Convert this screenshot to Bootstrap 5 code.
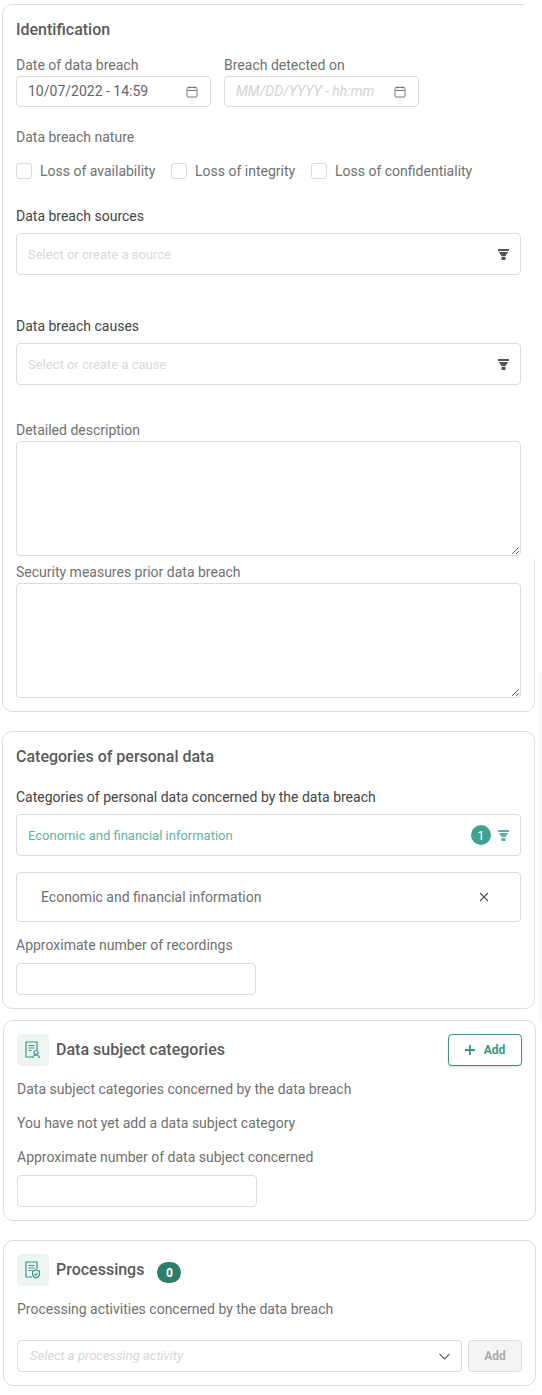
<!DOCTYPE html>
<html lang="en">
<head>
<meta charset="utf-8">
<title>Data breach</title>
<link href="https://cdn.jsdelivr.net/npm/bootstrap@5.3.0/dist/css/bootstrap.min.css" rel="stylesheet">
<style>
html,body{margin:0;background:#fff;}
body{font-family:Roboto,"Liberation Sans",sans-serif;font-size:14px;color:#707070;width:542px;height:1395px;overflow:hidden;position:relative;}
.pane{border:1px solid #dcdcdc;border-radius:10px;background:#fff;position:relative;}
.pane-a{margin:4px 7px 0 2px;height:708px;padding:13px 13px 0;}
.pane-b{margin:19px 7px 0 2px;height:278px;padding:13px 13px 0;}
.pane-c{margin:11px 6px 0 3px;height:201px;padding:13px 13px 0;}
.pane-d{margin:19px 6px 0 3px;height:146px;padding:13px 13px 0;}
.patch{position:absolute;background:#fff;}
.patch-top{left:521px;right:-8px;top:-2px;height:30px;}
.patch-right{right:-2px;width:4px;top:20px;height:534px;}
.track{position:absolute;left:538px;top:672px;width:4px;height:348px;background:#f8f9f9;}
.heading{font-size:16px;font-weight:500;color:#5a5a5a;line-height:24px;margin:0;}
.lbl{display:block;line-height:20px;margin:0;color:#707070;}
.lbl-dark{color:#444;}
.box{border:1px solid #dcdcdc;border-radius:4px;background:#fff;font-size:14px;box-shadow:none;padding:0;}
.date-box{width:195px;height:31px;padding:0 12px 0 11px;color:#666;}
.date-ph{color:#d2d2d2;font-style:italic;}
.drop-box{height:42px;padding:0 11px;font-size:13px;color:#d9d9d9;}
.drop-text{padding-top:2px;}
.drop-on{color:#62b3a4;}
.area{display:block;height:115px;width:505px;border-radius:4px;border-color:#dcdcdc;}
.num-box{width:240px;height:32px;display:block;border-color:#dcdcdc;border-radius:4px;}
.chk{width:16px;height:16px;margin:0 8px 0 0;border:1px solid #dadada;border-radius:3px;background:#fff;flex:none;}
.count{width:20px;height:20px;border-radius:50%;background:#3fa28e;color:#fff;font-size:13px;font-weight:400;padding:0;margin-right:7px;}
.item-box{height:50px;padding:0 31px 0 24px;color:#707070;margin-top:16px;}
.icon-tile{width:32px;height:32px;border-radius:4px;background:#edf5f3;flex:none;}
.add-on{width:74px;height:32px;border:1px solid #3a9485;border-radius:4px;color:#3a9485;font-size:12px;font-weight:700;padding:0;background:#fff;box-shadow:0 1px 2px rgba(0,0,0,.15);}
.add-off{width:54px;height:32px;border:1px solid #dedede;border-radius:4px;color:#aaa;font-size:12px;font-weight:700;padding:0;background:#f4f4f4;flex:none;}
.zero{width:24px;height:21px;border-radius:11px;background:#2f7d6b;color:#fff;font-size:12px;font-weight:700;padding:0;}
.sel-box{width:445px;height:32px;padding:0 11px 0 12px;color:#d6d6d6;font-style:italic;font-size:13px;}
</style>
</head>
<body>

<section class="pane pane-a">
  <span class="patch patch-top"></span><span class="patch patch-right"></span>
  <h2 class="heading">Identification</h2>
  <div class="d-flex" style="gap:13px;margin-top:2px">
    <div style="margin-top:14px">
      <label class="lbl" style="margin-top:-3px;margin-bottom:1px">Date of data breach</label>
      <div class="box date-box d-flex align-items-center justify-content-between">
        <span>10/07/2022 - 14:59</span>
        <svg width="12" height="12" viewBox="0 0 12 12" fill="none" stroke="#777"><rect x="1" y="1.5" width="10" height="9.5" rx="1"/><path d="M1 4.5h10M3.5 0v2.5M8.500 0v2.500"/></svg>
      </div>
    </div>
    <div style="margin-top:14px">
      <label class="lbl" style="margin-top:-3px;margin-bottom:1px">Breach detected on</label>
      <div class="box date-box d-flex align-items-center justify-content-between">
        <span class="date-ph">MM/DD/YYYY - hh:mm</span>
        <svg width="12" height="12" viewBox="0 0 12 12" fill="none" stroke="#777"><rect x="1" y="1.5" width="10" height="9.5" rx="1"/><path d="M1 4.5h10M3.5 0v2.5M8.500 0v2.500"/></svg>
      </div>
    </div>
  </div>
  <label class="lbl" style="margin-top:20px">Data breach nature</label>
  <div class="d-flex align-items-center" style="margin-top:14px;height:20px">
    <span class="chk"></span><span style="width:131px">Loss of availability</span>
    <span class="chk"></span><span style="width:116px">Loss of integrity</span>
    <span class="chk"></span><span>Loss of confidentiality</span>
  </div>
  <label class="lbl lbl-dark" style="margin-top:25px">Data breach sources</label>
  <div class="box drop-box d-flex align-items-center justify-content-between" style="margin-top:7px">
    <span class="drop-text">Select or create a source</span>
    <svg width="11" height="11" viewBox="0 0 11 11" fill="#555"><path d="M0 0h11v2H0zM.8 3h9.400L7.500 7h-4zM3.500 7.800h4V11h-4z"/></svg>
  </div>
  <label class="lbl lbl-dark" style="margin-top:41px">Data breach causes</label>
  <div class="box drop-box d-flex align-items-center justify-content-between" style="margin-top:7px">
    <span class="drop-text">Select or create a cause</span>
    <svg width="11" height="11" viewBox="0 0 11 11" fill="#555"><path d="M0 0h11v2H0zM.8 3h9.400L7.500 7h-4zM3.500 7.800h4V11h-4z"/></svg>
  </div>
  <label class="lbl" style="margin-top:35px">Detailed description</label>
  <textarea class="form-control area" style="margin-top:1px" aria-label="Detailed description"></textarea>
  <label class="lbl" style="margin-top:6px">Security measures prior data breach</label>
  <textarea class="form-control area" style="margin-top:1px" aria-label="Security measures prior data breach"></textarea>
</section>

<section class="pane pane-b">
  <h2 class="heading">Categories of personal data</h2>
  <label class="lbl lbl-dark" style="margin-top:18px">Categories of personal data concerned by the data breach</label>
  <div class="box drop-box drop-on d-flex align-items-center" style="margin-top:7px">
    <span class="flex-grow-1 drop-text">Economic and financial information</span>
    <span class="badge count d-flex align-items-center justify-content-center">1</span>
    <svg width="11" height="11" viewBox="0 0 11 11" fill="#5fb3a3"><path d="M0 0h11v2H0zM.8 3h9.400L7.500 7h-4zM3.500 7.800h4V11h-4z"/></svg>
  </div>
  <div class="box item-box d-flex align-items-center justify-content-between">
    <span>Economic and financial information</span>
    <svg width="10" height="10" viewBox="0 0 10 10" fill="none" stroke="#555" stroke-width="1.100"><path d="M1 1l8 8M9 1l-8 8"/></svg>
  </div>
  <label class="lbl" style="margin-top:13px">Approximate number of recordings</label>
  <input class="form-control num-box" style="margin-top:8px" type="text" aria-label="Approximate number of recordings">
</section>

<section class="pane pane-c">
  <div class="d-flex align-items-center">
    <div class="icon-tile d-flex align-items-center justify-content-center">
      <svg width="16" height="18" viewBox="0 0 16 18" fill="none" stroke="#3a9485" stroke-width="1.200"><path d="M7 16H1V1h11v8M3.500 4.500h6M3.500 7h6M3.500 9.500h3"/><circle cx="11" cy="11.500" r="2"/><path d="M7.500 17c.3-2 1.500-3 3.500-3s3.200 1 3.500 3"/></svg>
    </div>
    <h2 class="heading flex-grow-1" style="margin-left:7px">Data subject categories</h2>
    <button class="btn add-on d-flex align-items-center justify-content-center" style="gap:9px" type="button">
      <svg width="10" height="10" viewBox="0 0 10 10" stroke="#3a9485" stroke-width="1.800"><path d="M5 0v10M0 5h10"/></svg>Add
    </button>
  </div>
  <p class="lbl" style="margin-top:13px">Data subject categories concerned by the data breach</p>
  <p class="lbl" style="margin-top:14px">You have not yet add a data subject category</p>
  <p class="lbl" style="margin-top:14px">Approximate number of data subject concerned</p>
  <input class="form-control num-box" style="margin-top:8px" type="text" aria-label="Approximate number of data subject concerned">
</section>

<section class="pane pane-d">
  <div class="d-flex align-items-center">
    <div class="icon-tile d-flex align-items-center justify-content-center">
      <svg width="16" height="18" viewBox="0 0 16 18" fill="none" stroke="#3a9485" stroke-width="1.200"><path d="M7 16H1V1h11v7M3.500 4.500h6M3.500 7h6M3.500 9.500h3"/><path d="M11 9l3.500 1.200v3c0 2-1.500 3-3.500 3.800-2-.8-3.500-1.800-3.500-3.800v-3zM9.500 13l1.200 1.200 1.800-2" /></svg>
    </div>
    <h2 class="heading" style="margin-left:7px;margin-top:-1px">Processings</h2>
    <span class="badge zero d-flex align-items-center justify-content-center" style="margin-left:13px;margin-top:5px">0</span>
  </div>
  <p class="lbl" style="margin-top:13px">Processing activities concerned by the data breach</p>
  <div class="d-flex" style="margin-top:21px;gap:6px">
    <div class="box sel-box d-flex align-items-center justify-content-between">
      <span>Select a processing activity</span>
      <svg width="11" height="7" viewBox="0 0 11 7" fill="none" stroke="#555" stroke-width="1.100"><path d="M.5 .8l5 5.200 5-5.200"/></svg>
    </div>
    <button class="btn add-off" type="button">Add</button>
  </div>
</section>

<div class="track"></div>
<script src="https://cdn.jsdelivr.net/npm/bootstrap@5.3.0/dist/js/bootstrap.bundle.min.js"></script>
</body>
</html>
